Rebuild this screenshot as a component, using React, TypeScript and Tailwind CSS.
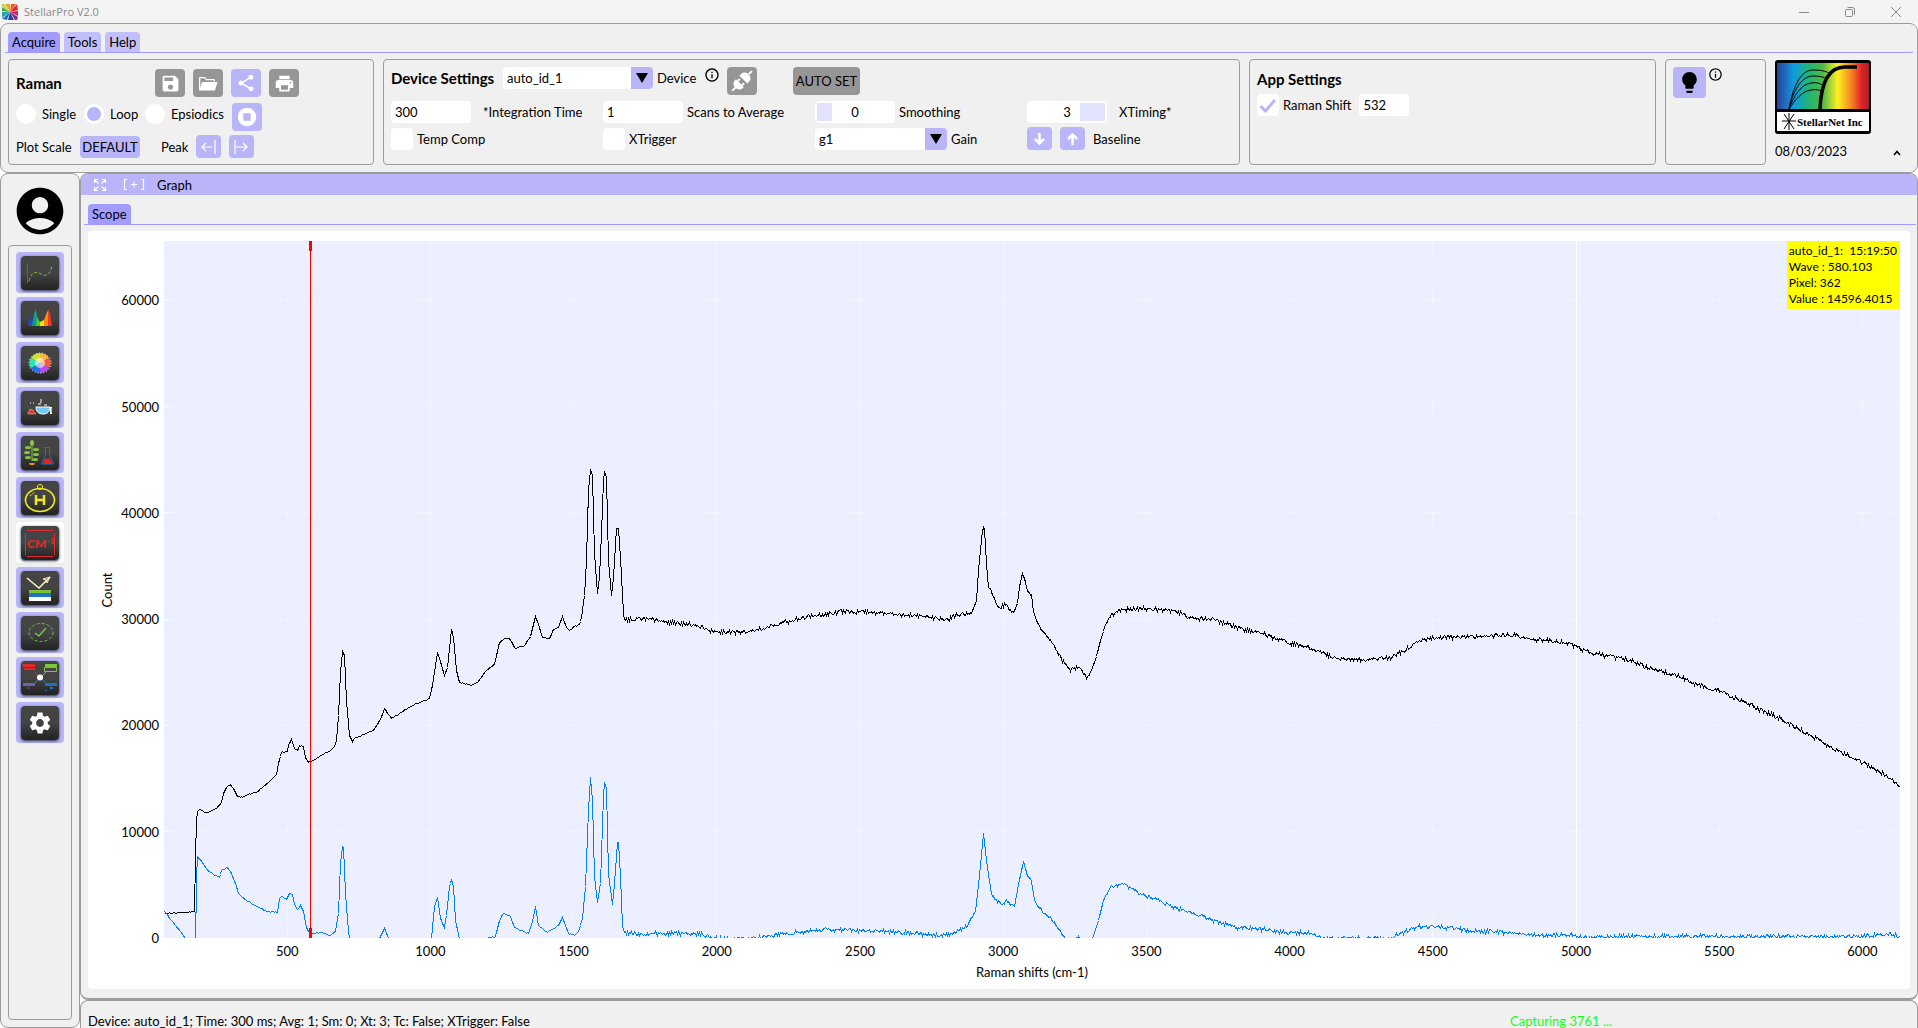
import React, { useMemo, useState } from "react";
import clsx from "clsx";
import {
  MdAccountCircle,
  MdInfoOutline,
  MdLightbulb,
  MdPrint,
  MdSave,
  MdSettings,
  MdShare,
  MdStopCircle,
} from "react-icons/md";

// Plot canvas, in chart units
const PLOT = { left: 164, top: 241, width: 1736, height: 697 };
const X_ORIGIN = 144; // position of 0 cm-1
const X_SCALE = 0.2864; // units per cm-1
const Y_SCALE = 0.01063; // units per count
const NOISE_START = 624;
const CURSOR = 310.5;

const xTicks = Array.from({ length: 12 }, (_, i) => (i + 1) * 500);
const yTicks = Array.from({ length: 7 }, (_, i) => i * 10000);

const rawTrace = [
  164, 913, 187, 912, 194, 911, 195, 857, 196, 820, 197, 811, 199, 809, 202,
  810, 204, 812, 208, 812, 212, 810, 216, 808, 221, 802, 223, 793, 226, 787,
  230, 784, 233, 788, 237, 796, 242, 797, 247, 794, 257, 791, 262, 787, 268,
  782, 276, 774, 278, 763, 281, 752, 287, 751, 288, 744, 291, 739, 294, 748,
  297, 750, 299, 745, 303, 746, 305, 757, 308, 762, 313, 760, 322, 754, 330,
  750, 334, 746, 336, 740, 338, 715, 340, 672, 342, 651, 344, 655, 346, 700,
  349, 735, 352, 741, 354, 738, 363, 734, 373, 730, 380, 719, 384, 708, 388,
  714, 391, 718, 410, 706, 429, 698, 432, 685, 437, 652, 439, 658, 444, 675,
  447, 667, 451, 629, 453, 637, 456, 670, 459, 682, 471, 685, 477, 682, 486,
  670, 494, 664, 499, 642, 505, 638, 509, 638, 515, 648, 524, 645, 530, 636,
  535, 616, 538, 624, 542, 637, 549, 638, 553, 629, 558, 627, 560, 621, 562,
  616, 566, 627, 569, 630, 574, 626, 579, 624, 581, 617, 584, 595, 586, 560,
  588, 490, 590, 469, 592, 475, 594, 553, 597, 593, 599, 577, 601, 533, 603,
  480, 604, 471, 606, 477, 608, 560, 611, 595, 613, 577, 616, 528, 618, 528,
  620, 557, 623, 613, 624, 619, 646, 618, 671, 622, 696, 625, 717, 632, 738,
  632, 760, 629, 781, 622, 810, 616, 842, 611, 867, 612, 896, 614, 921, 616,
  949, 619, 953, 615, 971, 613, 976, 600, 978, 570, 982, 529, 984, 529, 986,
  563, 988, 586, 993, 596, 996, 603, 999, 607, 1004, 605, 1009, 608, 1013, 612,
  1017, 603, 1019, 586, 1022, 573, 1024, 578, 1027, 591, 1031, 594, 1033, 611,
  1037, 623, 1046, 637, 1051, 640, 1058, 654, 1065, 665, 1069, 670, 1078, 667,
  1086, 677, 1091, 670, 1096, 656, 1100, 640, 1106, 621, 1112, 614, 1120, 610,
  1127, 609, 1148, 608, 1174, 611, 1190, 617, 1211, 619, 1237, 627, 1263, 634,
  1289, 642, 1315, 649, 1336, 658, 1368, 659, 1388, 658, 1404, 650, 1420, 640,
  1436, 637, 1483, 636, 1509, 634, 1530, 638, 1566, 642, 1592, 653, 1624, 658,
  1650, 668, 1671, 673, 1697, 684, 1718, 690, 1749, 704, 1781, 719, 1812, 736,
  1838, 751, 1864, 763, 1891, 778, 1900, 787,
];

// Values below the axis are clipped by the plot area
const baselineTrace = [
  164, 911, 187, 940, 190, 950, 195, 950, 196, 877, 197, 856, 204, 865, 208,
  871, 219, 877, 221, 870, 227, 867, 231, 873, 235, 883, 238, 893, 246, 900,
  256, 906, 267, 911, 277, 912, 279, 898, 281, 896, 286, 899, 289, 893, 292,
  894, 294, 904, 297, 909, 300, 905, 303, 911, 306, 927, 308, 931, 311, 933,
  321, 932, 329, 935, 335, 931, 338, 913, 340, 863, 342, 846, 343, 847, 345,
  893, 348, 931, 350, 945, 376, 945, 380, 936, 384, 928, 389, 940, 392, 950,
  428, 950, 431, 938, 434, 906, 437, 897, 440, 918, 444, 927, 446, 915, 449,
  886, 451, 879, 453, 886, 455, 920, 459, 938, 461, 945, 484, 945, 487, 938,
  495, 936, 499, 920, 503, 913, 510, 916, 514, 927, 528, 933, 532, 921, 535,
  906, 538, 925, 547, 932, 558, 925, 562, 917, 568, 933, 574, 935, 578, 931,
  582, 918, 585, 886, 588, 810, 590, 777, 592, 800, 594, 876, 597, 902, 600,
  883, 603, 796, 604, 782, 606, 788, 608, 873, 612, 904, 614, 883, 617, 842,
  618, 842, 620, 876, 622, 926, 624, 932, 638, 933, 674, 933, 696, 933, 710,
  937, 730, 939, 750, 938, 771, 935, 800, 931, 832, 929, 881, 931, 905, 932,
  930, 935, 953, 933, 967, 925, 975, 911, 979, 875, 983, 833, 986, 860, 991,
  894, 1000, 903, 1007, 901, 1014, 906, 1019, 879, 1023, 861, 1027, 875, 1031,
  881, 1034, 900, 1039, 908, 1052, 920, 1064, 937, 1068, 945, 1074, 940, 1078,
  936, 1082, 945, 1089, 945, 1092, 938, 1098, 920, 1103, 900, 1111, 886, 1120,
  884, 1130, 887, 1137, 892, 1158, 900, 1184, 911, 1211, 919, 1237, 927, 1263,
  929, 1289, 932, 1305, 932, 1315, 935, 1331, 938, 1388, 938, 1407, 930, 1420,
  926, 1441, 926, 1467, 930, 1509, 932, 1535, 935, 1571, 934, 1582, 937, 1618,
  936, 1700, 936, 1780, 936, 1860, 936, 1880, 934, 1890, 933, 1900, 937,
];

// Interpolates a trace to one sample per unit and adds detector noise
function buildTrace(values: number[], seed: number) {
  let state = seed;
  const random = () => {
    state = (state * 16807) % 2147483647;
    return state / 2147483647 - 0.5;
  };

  const points: string[] = [];
  for (let i = 0; i + 3 < values.length; i += 2) {
    const [x0, y0, x1, y1] = values.slice(i, i + 4);
    for (let x = x0; x < x1; x++) {
      const steep = Math.abs(y1 - y0) > 2 * (x1 - x0);
      const amplitude = steep ? 0 : x > NOISE_START ? 4 : 1;
      const y = y0 + ((y1 - y0) * (x - x0)) / (x1 - x0) + random() * amplitude;
      points.push(`${x + 0.5},${Math.round(y) + 0.5}`);
    }
  }
  return points.join(" ");
}

const toX = (shift: number) => X_ORIGIN + shift * X_SCALE;
const toY = (count: number) => PLOT.top + PLOT.height - count * Y_SCALE;

const App = () => (
  <div className="h-screen flex flex-col overflow-hidden bg-white font-['Lato','Liberation_Sans',sans-serif] text-[13px] leading-4 text-black select-none">
    <TitleBar />
    <Toolbar />
    <div className="flex-1 min-h-0 flex">
      <Sidebar />
      <div className="flex-1 min-w-0 flex flex-col">
        <GraphPanel />
        <StatusBar />
      </div>
    </div>
  </div>
);

export default App;

const TitleBar = () => (
  <header className="h-[23px] shrink-0 flex items-center justify-between bg-[#f3f3f3] pl-0.5 pr-4 text-[#8a8a8a]">
    <div className="flex items-center gap-1.5">
      <BurstIcon />
      <h1 className="font-['Open_Sans',sans-serif] text-[11px]">StellarPro V2.0</h1>
    </div>
    <div className="flex items-center gap-[34px]">
      <button aria-label="Minimize">
        <svg width="12" height="12" viewBox="0 0 12 12" stroke="currentColor">
          <path d="M1 6.5h10" />
        </svg>
      </button>
      <button aria-label="Restore">
        <svg width="12" height="12" viewBox="0 0 12 12" fill="none" stroke="currentColor">
          <rect x="1.5" y="3.5" width="7" height="7" rx="1" />
          <path d="M3.5 1.5h5a2 2 0 0 1 2 2v5" />
        </svg>
      </button>
      <button aria-label="Close">
        <svg width="12" height="12" viewBox="0 0 12 12" stroke="currentColor">
          <path d="M1 1l10 10M11 1L1 11" />
        </svg>
      </button>
    </div>
  </header>
);

const Toolbar = () => (
  <section className="shrink-0 h-[150px] rounded-lg border border-[#9c9c9c] bg-[#f0f0f0] px-1 pt-2">
    <nav className="flex gap-1 border-b border-[#a29cff] pl-[3px]">
      <Tab label="Acquire" active />
      <Tab label="Tools" />
      <Tab label="Help" />
    </nav>
    <div className="mt-1.5 ml-[3px] h-[106px] grid grid-cols-[366fr_857fr_407fr_101fr_138fr] gap-[9px]">
      <RamanGroup />
      <DeviceGroup />
      <AppGroup />
      <div className="flex gap-0.5 rounded border border-[#9c9c9c] p-[7px]">
        <button
          aria-label="Lamp"
          className="w-[33px] h-[31px] rounded bg-[#b9b5f8] flex items-center justify-center"
        >
          <MdLightbulb size={25} />
        </button>
        <MdInfoOutline size={15} />
      </div>
      <div className="flex flex-col pt-px">
        <StellarLogo />
        <div className="mt-[9px] flex items-center justify-between pr-[11px]">
          <span>08/03/2023</span>
          <button aria-label="Collapse" className="pt-1">
            <svg width="10" height="8" viewBox="0 0 10 8" fill="none" stroke="black" strokeWidth="1.6">
              <path d="M2 6l3-3.5L8 6" />
            </svg>
          </button>
        </div>
      </div>
    </div>
  </section>
);

interface TabProps {
  label: string;
  active?: boolean;
}

const Tab = ({ label, active }: TabProps) => (
  <button
    className={clsx(
      "h-5 rounded-t px-1 leading-5",
      active ? "bg-[#a29cff]" : "bg-[#c3bffa]"
    )}
  >
    {label}
  </button>
);

const RamanGroup = () => {
  const [mode, setMode] = useState("Loop");

  return (
    <div className="flex flex-col rounded border border-[#9c9c9c] pl-[7px] pt-[9px]">
      <div className="flex items-center">
        <h2 className="w-[139px] text-[15px] font-bold">Raman</h2>
        <div className="flex gap-2">
          <IconButton label="Save" muted>
            <MdSave size={21} />
          </IconButton>
          <IconButton label="Open" muted>
            <FolderIcon />
          </IconButton>
          <IconButton label="Share">
            <MdShare size={20} />
          </IconButton>
          <IconButton label="Print" muted>
            <MdPrint size={21} />
          </IconButton>
        </div>
      </div>
      <div className="mt-1.5 flex items-start">
        {["Single", "Loop", "Epsiodics"].map((name) => (
          <label
            key={name}
            className={clsx(
              "flex items-center gap-1.5 h-[22px]",
              name === "Epsiodics" ? "w-[87px]" : name === "Loop" ? "w-[61px]" : "w-[68px]"
            )}
          >
            <input
              type="radio"
              name="mode"
              checked={mode === name}
              onChange={() => setMode(name)}
              className="appearance-none size-5 shrink-0 rounded-full border-[3px] border-white bg-white checked:bg-[#b9b5f8]"
            />
            {name}
          </label>
        ))}
        <IconButton label="Stop">
          <MdStopCircle size={22} />
        </IconButton>
      </div>
      <div className="mt-1 flex items-center">
        <span className="w-16">Plot Scale</span>
        <button className="h-[22px] w-[60px] rounded bg-[#b9b5f8] text-center">DEFAULT</button>
        <span className="ml-[21px] w-[35px]">Peak</span>
        <div className="flex gap-2">
          <SmallButton label="Previous peak">
            <path d="M6 8h10M10 4L6 8l4 4M19 1v14" />
          </SmallButton>
          <SmallButton label="Next peak">
            <path d="M6 8h12M14 4l4 4-4 4M6 1v14" />
          </SmallButton>
        </div>
      </div>
    </div>
  );
};

const DeviceGroup = () => (
  <div className="flex flex-col rounded border border-[#9c9c9c] pl-[7px] pt-[7px]">
    <div className="flex items-start">
      <h2 className="w-28 leading-[22px] text-[15px] font-bold">Device Settings</h2>
      <label className="flex items-center gap-1">
        <Select value="auto_id_1" className="w-[150px]" />
        <span className="w-[47px]">Device</span>
      </label>
      <MdInfoOutline size={16} />
      <div className="ml-[7px]">
        <IconButton label="Connect" muted>
          <PlugIcon />
        </IconButton>
      </div>
      <button className="ml-9 h-7 w-[67px] rounded bg-[#969696]">AUTO SET</button>
    </div>
    <div className="mt-1.5 grid grid-cols-[212px_212px_212px_1fr] gap-y-1 items-center">
      <label className="flex items-center gap-3">
        <TextField value="300" className="w-20" />
        *Integration Time
      </label>
      <label className="flex items-center gap-1">
        <TextField value="1" className="w-20" />
        Scans to Average
      </label>
      <label className="flex items-center gap-1">
        <DragSlider value={0} max={5} thumb="[&::-webkit-slider-thumb]:w-[15px]" />
        Smoothing
      </label>
      <label className="flex items-center gap-3">
        <DragSlider value={3} max={3} thumb="[&::-webkit-slider-thumb]:w-[25px]" />
        XTiming*
      </label>
      <label className="flex items-center gap-1">
        <Checkbox />
        Temp Comp
      </label>
      <label className="flex items-center gap-1">
        <Checkbox />
        XTrigger
      </label>
      <label className="flex items-center gap-1">
        <Select value="g1" className="w-[132px]" />
        Gain
      </label>
      <div className="flex items-center gap-2">
        <SmallButton label="Baseline down" bold>
          <path d="M12.5 2v10M8 8l4.500 4.500L17 8" />
        </SmallButton>
        <SmallButton label="Baseline up" bold>
          <path d="M12.500 14V4M8 8l4.500-4.500L17 8" />
        </SmallButton>
        <span>Baseline</span>
      </div>
    </div>
  </div>
);

const AppGroup = () => (
  <div className="flex flex-col rounded border border-[#9c9c9c] pl-[7px] pt-[7px]">
    <h2 className="leading-6 text-[15px] font-bold">App Settings</h2>
    <div className="mt-[3px] flex items-center gap-2">
      <label className="flex items-center gap-1">
        <Checkbox defaultChecked />
        Raman Shift
      </label>
      <TextField value="532" label="Laser wavelength" className="w-[50px]" />
    </div>
  </div>
);

interface IconButtonProps {
  label: string;
  muted?: boolean;
  children: React.ReactNode;
}

const IconButton = ({ label, muted, children }: IconButtonProps) => (
  <button
    aria-label={label}
    className={clsx(
      "w-[30px] h-7 rounded flex items-center justify-center text-white",
      muted ? "bg-[#969696]" : "bg-[#b9b5f8]"
    )}
  >
    {children}
  </button>
);

interface SmallButtonProps {
  label: string;
  bold?: boolean;
  children: React.ReactNode;
}

const SmallButton = ({ label, bold, children }: SmallButtonProps) => (
  <button
    aria-label={label}
    className="w-[25px] h-[23px] rounded bg-[#b9b5f8] flex items-center justify-center"
  >
    <svg
      width="25"
      height="16"
      viewBox="0 0 25 16"
      fill="none"
      stroke="white"
      strokeWidth={bold ? 2.5 : 1.2}
    >
      {children}
    </svg>
  </button>
);

interface FieldProps {
  value: string;
  label?: string;
  className?: string;
}

const TextField = ({ value, label, className }: FieldProps) => (
  <input
    type="text"
    aria-label={label}
    defaultValue={value}
    className={clsx("h-[22px] rounded bg-white px-1", className)}
  />
);

const Select = ({ value, className }: FieldProps) => (
  <span className={clsx("relative flex h-[22px]", className)}>
    <select className="w-full appearance-none rounded bg-white pl-1 pr-6">
      <option>{value}</option>
    </select>
    <span className="absolute right-0 top-0 size-[22px] rounded-r bg-[#b9b5f8] flex items-center justify-center pointer-events-none">
      <svg width="12" height="10" viewBox="0 0 12 10">
        <path d="M0 0h12L6 10z" />
      </svg>
    </span>
  </span>
);

interface DragSliderProps {
  value: number;
  max: number;
  thumb: string;
}

const DragSlider = ({ value, max, thumb }: DragSliderProps) => {
  const [current, setCurrent] = useState(value);

  return (
    <span className="relative flex w-20 h-[22px] items-center rounded bg-white p-0.5">
      <input
        type="range"
        min={0}
        max={max}
        value={current}
        onChange={(e) => setCurrent(Number(e.target.value))}
        className={clsx(
          "w-full h-[18px] appearance-none bg-transparent [&::-webkit-slider-thumb]:appearance-none [&::-webkit-slider-thumb]:h-[18px] [&::-webkit-slider-thumb]:bg-[#e2e1fe]",
          thumb
        )}
      />
      <span className="absolute inset-0 flex items-center justify-center pointer-events-none">
        {current}
      </span>
    </span>
  );
};

const Checkbox = ({ defaultChecked }: { defaultChecked?: boolean }) => (
  <span className="relative flex size-[22px]">
    <input
      type="checkbox"
      defaultChecked={defaultChecked}
      className="peer size-full appearance-none rounded bg-white"
    />
    <svg
      className="absolute inset-0 hidden peer-checked:block pointer-events-none"
      viewBox="0 0 22 22"
      fill="none"
      stroke="#b9b5f8"
      strokeWidth="3"
    >
      <path d="M3.500 12l5 5L18 6" />
    </svg>
  </span>
);

const sidebarItems = [
  {
    label: "Scope",
    icon: (
      <>
        <path d="M6.500 7v20" stroke="#e02b2b" />
        <path d="M8 25c3-11 8-9 12-7s9 3 11-9" stroke="#7fc241" strokeDasharray="3 2" />
      </>
    ),
  },
  {
    label: "Spectrum",
    icon: (
      <g stroke="none">
        <path d="M7 25l1-6 2-2 1 3 1-4v9z" fill="#2346c8" />
        <path d="M11 25l2-12 1.500-5 2 8v9z" fill="#17988c" />
        <path d="M15 25l1-9 3 5v4z" fill="#3fd22b" />
        <path d="M19 25v-4l4-2v6z" fill="#f2e01d" />
        <path d="M23 25v-6l3-8 1.500-2 1 16z" fill="#f98a12" />
        <path d="M27 25V9l2 3 2 13z" fill="#f03a20" />
      </g>
    ),
  },
  {
    label: "Color",
    icon: (
      <g stroke="none">
        <path d="M19 17V7a11 10 0 0 1 9 5z" fill="#ffb43a" />
        <path d="M19 17l9-5a11 10 0 0 1 0 10z" fill="#f95a37" />
        <path d="M19 17l9 5a11 10 0 0 1-9 5z" fill="#b44df5" />
        <path d="M19 17v10a11 10 0 0 1-9-5z" fill="#1f73f0" />
        <path d="M19 17l-9 5a11 10 0 0 1 0-10z" fill="#29e8b0" />
        <path d="M19 17l-9-5a11 10 0 0 1 9-5z" fill="#c6ea34" />
        <circle cx="19" cy="17" r="5" fill="white" fillOpacity="0.6" />
        <ellipse cx="19" cy="17" rx="11" ry="10" fill="none" stroke="white" strokeDasharray="1 2" />
      </g>
    ),
  },
  {
    label: "Chemistry",
    icon: (
      <>
        <path d="M15 16h14c0 5-3 7-7 7s-7-2-7-7z" fill="#74c8f5" stroke="white" />
        <path d="M7 22l2-4 3 1 3 4H7z" fill="#e83c2a" stroke="#f7b0a5" strokeDasharray="1 1" />
        <path d="M20 8v4M17 13h3M23 14h3M9 12h1M12 12h1" stroke="white" />
        <path d="M30 16v7" stroke="white" strokeWidth="2" />
        <path d="M30.500 17v5" stroke="#e8c040" />
      </>
    ),
  },
  {
    label: "Plants",
    icon: (
      <>
        <g fill="#86c440" stroke="none">
          <ellipse cx="11" cy="7" rx="2" ry="3" />
          <ellipse cx="7" cy="11.500" rx="3" ry="1.500" />
          <ellipse cx="15" cy="13.500" rx="3" ry="1.500" />
          <ellipse cx="6" cy="16.500" rx="3" ry="1.500" />
          <ellipse cx="15" cy="18.500" rx="3" ry="1.500" />
          <ellipse cx="7" cy="21.500" rx="3" ry="1.500" />
          <ellipse cx="14" cy="23.500" rx="3" ry="1.500" />
        </g>
        <path d="M11 8v17" stroke="#86c440" />
        <path d="M8 27h6l-1 2H9z" fill="#f28d1c" stroke="none" />
        <path d="M23 11.500h6M24.500 12v7l-4 9h12l-4-9v-7" stroke="#1c6fb8" />
        <path d="M22 28l2-6 2 1 2-1 4 6z" fill="#e52620" stroke="none" />
      </>
    ),
  },
  {
    label: "Hydrogen",
    icon: (
      <g stroke="#f0ea22">
        <ellipse cx="19" cy="19" rx="14.500" ry="11.500" strokeWidth="1.6" />
        <circle cx="19" cy="6" r="2.500" />
        <path d="M15 14v10M23 14v10M15 19h8" strokeWidth="2.500" />
        <path d="M9 15l5-4" strokeDasharray="2 1" />
      </g>
    ),
  },
  {
    label: "Raman",
    icon: (
      <g stroke="#e22a2a">
        <path d="M4.500 7v22M33.500 7v22M6 4.500h26M6 30.500h26" />
        <text
          x="6"
          y="22"
          fill="#e22a2a"
          stroke="none"
          className="font-['Lato',sans-serif] text-xs font-bold"
        >
          CM
        </text>
        <text
          x="26"
          y="18"
          fill="#e22a2a"
          stroke="none"
          className="font-['Lato',sans-serif] text-[8px] font-bold"
        >
          -1
        </text>
      </g>
    ),
  },
  {
    label: "Thin film",
    icon: (
      <>
        <path d="M6 7l12 10L29 6" stroke="#fbf3c8" strokeWidth="1.500" />
        <path d="M22 8l7-2-3 6-1-3z" stroke="#fbf3c8" />
        <path d="M8 19h22v4H8z" fill="#7cbf3a" stroke="none" />
        <path d="M8 22h22v4H8z" fill="#1b74bd" stroke="none" />
        <path d="M8 26h22v4H8z" fill="white" stroke="none" />
      </>
    ),
  },
  {
    label: "Quality",
    icon: (
      <g stroke="#71bf44">
        <ellipse cx="20" cy="16.500" rx="12" ry="9" strokeDasharray="3 2" />
        <path d="M14 17l4 3 7-8" strokeWidth="1.500" />
      </g>
    ),
  },
  {
    label: "Mind map",
    icon: (
      <>
        <path d="M19 17l-5-6" stroke="#e22a2a" />
        <path d="M19 17l7-7" stroke="#7cc63c" />
        <path d="M19 17l-6 6" stroke="#7a72c8" />
        <path d="M19 17l7 6" stroke="#1b74bd" />
        <path d="M2 3h12v3H2zM3 7h11v2H3z" fill="#e22a2a" stroke="none" />
        <path d="M24 3h12v3H24z" fill="#7cc63c" stroke="none" />
        <path d="M23.500 6.500h12v4h-12z" stroke="#7cc63c" />
        <path d="M2 22h12v3H2zM7 26h1v2H7z" fill="#6a66a8" stroke="none" />
        <path d="M24 22h12v3H24zM29 26h3v2h-3zM24 29h2v1h-2z" fill="#1b74bd" stroke="none" />
        <circle cx="19" cy="16.500" r="3" fill="white" stroke="none" />
      </>
    ),
  },
  {
    label: "Settings",
    icon: <MdSettings x="6" y="4" size={26} color="white" stroke="none" />,
  },
];

const Sidebar = () => {
  const [selected, setSelected] = useState("Raman");

  return (
    <aside className="w-20 shrink-0 flex flex-col items-center rounded-lg border border-[#9c9c9c] bg-[#f0f0f0] px-[7px] pt-[9px] pb-[7px]">
      <button aria-label="Account">
        <MdAccountCircle size={56} />
      </button>
      <div className="mt-1.5 flex-1 w-full flex flex-col items-center gap-1 rounded border border-[#9c9c9c] pt-1.5">
        {sidebarItems.map(({ label, icon }) => (
          <button
            key={label}
            aria-label={label}
            onClick={() => setSelected(label)}
            className={clsx(
              "w-12 h-[41px] shrink-0 rounded flex items-center justify-center",
              selected === label ? "bg-white" : "bg-[#b9b5f8]"
            )}
          >
            <span className="rounded-sm bg-linear-to-b from-[#444444] from-50% to-[#222222] shadow-sm shadow-gray-700">
              <svg width="38" height="34" viewBox="0 0 38 34" fill="none">
                {icon}
              </svg>
            </span>
          </button>
        ))}
      </div>
    </aside>
  );
};

const GraphPanel = () => (
  <main className="flex-1 min-h-0 flex flex-col rounded-lg border border-b-2 border-[#9c9c9c] bg-[#f0f0f0] overflow-hidden">
    <div className="h-[21px] shrink-0 flex items-center bg-[#b9b5f8] pl-3">
      <button aria-label="Expand" className="w-[30px]">
        <svg width="14" height="14" viewBox="0 0 14 14" fill="none" stroke="white" strokeWidth="1.2">
          <path d="M1.500 5V1.500H5M9 1.500h3.500V5M12.500 9v3.500H9M5 12.500H1.500V9M2 2l3.500 3.500M12 2L8.500 5.500M12 12L8.500 8.500M2 12l3.500-3.500" />
        </svg>
      </button>
      <button aria-label="Add" className="w-[34px]">
        <svg width="22" height="13" viewBox="0 0 22 13" fill="none" stroke="white" strokeWidth="1.2">
          <path d="M4 1.500H1.500v10H4M18 1.500h2.500v10H18M11 3.500v6M8 6.500h6" />
        </svg>
      </button>
      <h2>Graph</h2>
    </div>
    <nav className="mt-[9px] ml-[3px] mr-px flex border-b border-[#a29cff] pl-1">
      <Tab label="Scope" active />
    </nav>
    <div className="flex-1 min-h-0 mt-1.5 mb-[9px] ml-[7px] mr-[7px] flex flex-col rounded bg-white pt-2.5 pr-2.5">
      <div className="flex-1 min-h-0 flex">
        <YAxis />
        <Plot />
      </div>
      <XAxis />
    </div>
  </main>
);

const YAxis = () => (
  <div className="w-[76px] shrink-0 relative">
    <span className="absolute left-[11px] top-1/2 -translate-y-1/2 [writing-mode:vertical-rl] rotate-180">
      Count
    </span>
    {yTicks.map((tick) => (
      <span
        key={tick}
        className="absolute right-[5px] -translate-y-1/2"
        style={{ top: `${((toY(tick) - PLOT.top) / PLOT.height) * 100}%` }}
      >
        {tick}
      </span>
    ))}
  </div>
);

const XAxis = () => (
  <div className="h-[51px] shrink-0 pl-[76px] flex flex-col items-center">
    <div className="relative w-full h-6">
      {xTicks.map((tick) => (
        <span
          key={tick}
          className="absolute top-[5px] -translate-x-1/2"
          style={{ left: `${((toX(tick) - PLOT.left) / PLOT.width) * 100}%` }}
        >
          {tick}
        </span>
      ))}
    </div>
    <span className="mt-0.5">Raman shifts (cm-1)</span>
  </div>
);

const Plot = () => {
  const raw = useMemo(() => buildTrace(rawTrace, 42), []);
  const baseline = useMemo(() => buildTrace(baselineTrace, 977), []);
  const bottom = PLOT.top + PLOT.height;

  return (
    <div className="flex-1 min-w-0 relative bg-[#ecefff]">
      <svg
        className="absolute inset-0 size-full"
        viewBox={`${PLOT.left} ${PLOT.top} ${PLOT.width} ${PLOT.height}`}
        preserveAspectRatio="none"
        fill="none"
        shapeRendering="crispEdges"
      >
        {xTicks.map((tick) => (
          <path
            key={tick}
            d={`M${toX(tick)} ${PLOT.top}V${bottom}`}
            stroke="white"
            strokeOpacity={tick === 5000 ? 0.9 : 0.3}
          />
        ))}
        {xTicks.map((tick) => (
          <path key={tick} d={`M${toX(tick)} ${bottom - 5}V${bottom}`} stroke="white" />
        ))}
        {yTicks.map((tick) => (
          <g key={tick} stroke="white">
            <path d={`M${PLOT.left} ${toY(tick)}h${PLOT.width}`} strokeOpacity={0.3} />
            <path d={`M${PLOT.left} ${toY(tick)}h5`} />
          </g>
        ))}
        <polyline points={raw} stroke="black" />
        <polyline points={baseline} stroke="#0080ff" />
        <path d={`M${CURSOR} ${PLOT.top}V${bottom}`} stroke="red" />
        <path
          d={`M${CURSOR} ${PLOT.top}v10M${CURSOR} ${bottom - 10}v10`}
          stroke="red"
          strokeWidth="3"
        />
      </svg>
      <div className="absolute top-0 right-0 bg-[#ffff00] py-0.5 pl-0.5 pr-[3px] text-xs leading-4 whitespace-pre">
        <p>auto_id_1:  15:19:50</p>
        <p>Wave : 580.103</p>
        <p>Pixel: 362</p>
        <p>Value : 14596.4015</p>
      </div>
    </div>
  );
};

const StatusBar = () => (
  <footer className="h-7 shrink-0 rounded-t-lg border border-b-0 border-[#9c9c9c] bg-[#f0f0f0] px-[7px] pt-3 overflow-hidden grid grid-cols-[1422fr_400fr]">
    <span>Device: auto_id_1; Time: 300 ms; Avg: 1; Sm: 0; Xt: 3; Tc: False; XTrigger: False</span>
    <span className="text-[#1cfa1c]">Capturing 3761 ...</span>
  </footer>
);

const FolderIcon = () => (
  <svg width="20" height="17" viewBox="0 0 20 17" fill="white">
    <path d="M1 15V3a1 1 0 0 1 1-1h5l1.500 2H16a1 1 0 0 1 1 1v1.500h-1.300V5.300H8L6.500 3.300H2.300V13L4 7h15.500L17 15.500H1.500z" />
  </svg>
);

const PlugIcon = () => (
  <svg width="24" height="24" viewBox="0 0 24 24">
    <g transform="rotate(-45 12 12)" fill="white">
      <path d="M-2 11h5v2h-5zM9 8h3v2H9zM9 14h3v2H9z" />
      <path d="M9 6.500v11H7A4.500 5.500 0 0 1 7 6.500z" />
      <path d="M14 6.500v11h3a4.500 5.500 0 0 0 0-11zM21 11h5v2h-5z" />
    </g>
  </svg>
);

const BurstIcon = () => (
  <svg width="16" height="16" viewBox="0 0 16 16">
    <rect width="16" height="16" fill="white" />
    <path d="M8 8L3 0h5z" fill="#f6a21c" />
    <path d="M8 8L9 0h5z" fill="#f05a1e" />
    <path d="M8 8l7-8 1 6z" fill="#e8242a" />
    <path d="M8 8l8-1v5z" fill="#d81e5b" />
    <path d="M8 8l8 5-1 3h-2z" fill="#7b2a8e" />
    <path d="M8 8l4 8H6z" fill="#2a3f9e" />
    <path d="M8 8l-3 8-5-1z" fill="#1c74c4" />
    <path d="M8 8l-8 6V8z" fill="#22a6b0" />
    <path d="M8 8L0 7V3z" fill="#3bab3f" />
    <path d="M8 8L0 2V0h2z" fill="#b6d430" />
  </svg>
);

const StellarLogo = () => (
  <svg width="96" height="74" viewBox="0 0 96 74" fill="none">
    <defs>
      <linearGradient id="spectrum">
        <stop offset="0" stopColor="#2c3f98" />
        <stop offset="0.18" stopColor="#0e9be0" />
        <stop offset="0.35" stopColor="#21b573" />
        <stop offset="0.5" stopColor="#52b848" />
        <stop offset="0.66" stopColor="#fdf022" />
        <stop offset="0.82" stopColor="#f47b20" />
        <stop offset="0.92" stopColor="#e3202a" />
        <stop offset="1" stopColor="#a5242c" />
      </linearGradient>
    </defs>
    <rect width="96" height="74" rx="3" fill="black" />
    <rect x="2" y="3" width="92" height="46" fill="url(#spectrum)" />
    <rect x="2" y="52" width="92" height="19" fill="white" />
    <g stroke="black">
      <path d="M45 49C46 24 53 7 70 7h12" strokeWidth="3.500" />
      <path d="M14 49C18 26 26 10 38 10c8 0 12 1 16 3" />
      <path d="M14 49C18 31 26 17 37 16c8 0 12 1 15 3" />
      <path d="M14 49C19 36 26 24 36 23c7-1 10 1 13 3" />
      <path d="M14 49C20 40 27 31 36 30c5-1 8 0 11 1" />
      <path d="M14 53v17M7 61h14M9 54l10 15M19 54L9 69" />
    </g>
    <text
      x="22"
      y="66"
      fill="black"
      className="font-['Liberation_Serif',serif] text-[11px] font-bold"
    >
      StellarNet Inc
    </text>
  </svg>
);
